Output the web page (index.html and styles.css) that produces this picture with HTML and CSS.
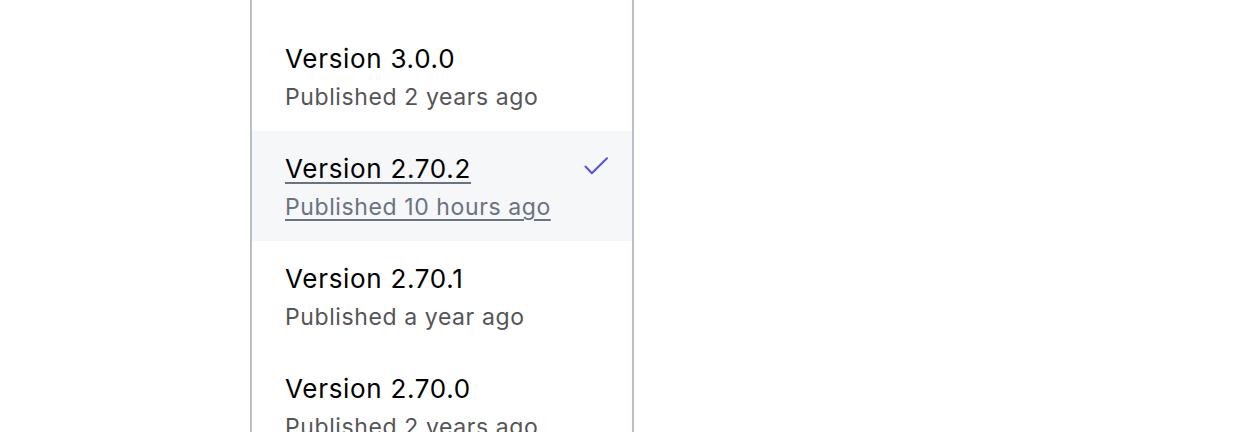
FILE: index.html
```html
<!DOCTYPE html>
<html lang="en">
<head>
  <meta charset="UTF-8" />
  <meta name="viewport" content="width=device-width, initial-scale=1.0"/>
  <title>Versions</title>

  <link rel="stylesheet" href="styles.css">
</head>
<body>

  <!-- Version picker list -->
  <div class="version-panel">
    <ul class="version-list">
      <li class="version-item">
        <div class="version-text">
          <span class="version-name">Version 3.1.0</span>
          <span class="version-date">Published 2 years ago</span>
        </div>
      </li>

      <li class="version-item">
        <div class="version-text">
          <span class="version-name">Version 3.0.0</span>
          <span class="version-date">Published 2 years ago</span>
        </div>
      </li>

      <!-- Current version -->
      <li class="version-item active">
        <div class="version-text">
          <span class="version-name">Version 2.70.2</span>
          <span class="version-date">Published 10 hours ago</span>
        </div>
        <svg class="check" width="24" height="24" viewBox="0 0 24 24" fill="none">
          <path d="M1.5 11.5 L7.8 18.2 L23 3.2" stroke="currentColor" stroke-width="2" stroke-linecap="round" stroke-linejoin="round"/>
        </svg>
      </li>

      <li class="version-item">
        <div class="version-text">
          <span class="version-name">Version 2.70.1</span>
          <span class="version-date">Published a year ago</span>
        </div>
      </li>

      <li class="version-item">
        <div class="version-text">
          <span class="version-name">Version 2.70.0</span>
          <span class="version-date">Published 2 years ago</span>
        </div>
      </li>
    </ul>
  </div>

</body>
</html>
```

FILE: styles.css
```css
* {
  box-sizing: border-box;
}

body {
  margin: 0;
  font-family: Inter, 'Noto Sans', sans-serif;
  background: #fff;
  height: 432px;
  overflow: hidden;
}

.version-panel {
  width: 384px;
  margin-left: 250px;
  height: 432px;
  overflow: hidden;
  border-left: 2px solid #b9bdcb;
  border-right: 2px solid #b9bdcb;
}

.version-list {
  list-style: none;
  margin: -89px 0 0 0;
  padding: 0;
}

.version-item {
  display: flex;
  justify-content: space-between;
  align-items: flex-start;
  height: 110px;
  padding: 20px 24px 18px 33px;
}

.version-text {
  display: flex;
  flex-direction: column;
}

.version-name {
  font-size: 26px;
  line-height: 36px;
  letter-spacing: 0.7px;
  color: #000;
}

.version-date {
  margin-top: 4px;
  font-size: 23px;
  line-height: 32px;
  letter-spacing: 0.6px;
  color: #555558;
}

/* Selected row */
.version-item.active {
  background: #f6f7f9;
}

.version-item.active .version-name,
.version-item.active .version-date {
  text-decoration: underline;
  text-decoration-color: #6b7280;
  text-decoration-thickness: 2px;
  text-underline-offset: 4px;
}

.version-item.active .version-date {
  color: #6b7280;
}

.check {
  margin-top: 4px;
  color: #5b4fe3;
  flex-shrink: 0;
}
```
